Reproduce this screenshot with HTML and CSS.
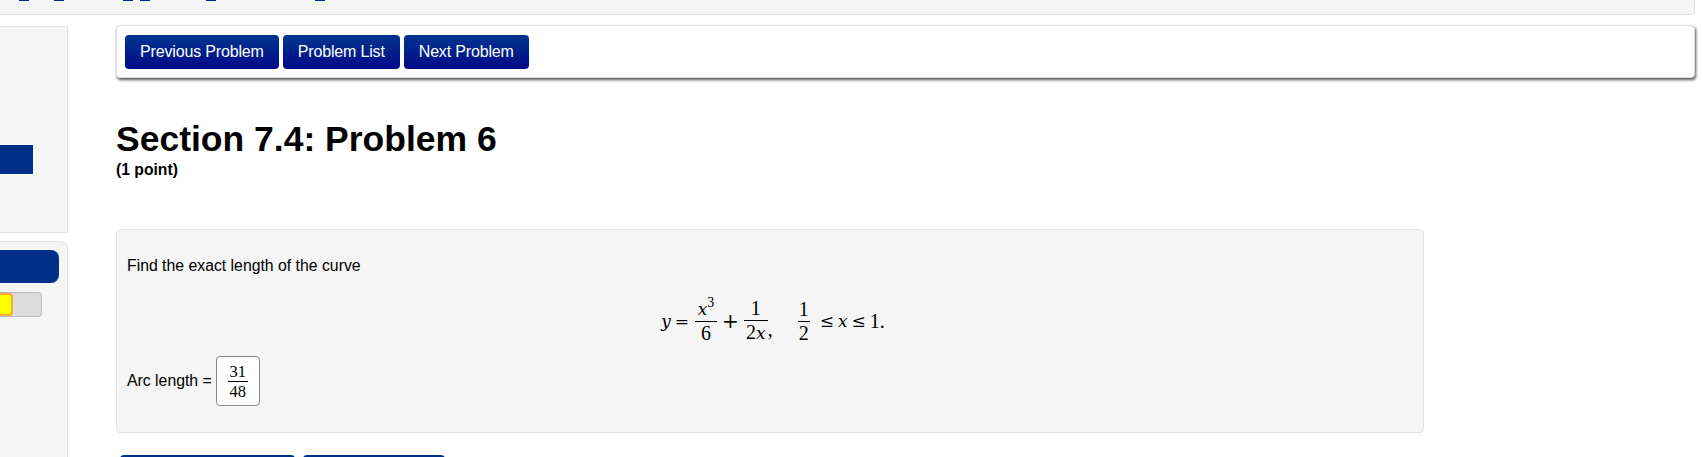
FILE: index.html
```html
<!DOCTYPE html>
<html lang="en">
<head>
	<meta charset="UTF-8">
	<title>Section 7.4: Problem 6</title>
	<link rel="stylesheet" href="styles.css">
</head>
<body>
	<div class="topbar">
		<span class="mark m1"></span>
		<span class="mark m2"></span>
		<span class="mark m3"></span>
		<span class="mark m4"></span>
		<span class="mark m5"></span>
		<span class="mark m6"></span>
	</div>
	<div class="page">
		<div class="sidebar">
			<div class="panel panel-top">
				<div class="block"></div>
			</div>
			<div class="panel panel-progress">
				<div class="pill"></div>
				<div class="progressbar">
					<div class="progress"></div>
				</div>
			</div>
		</div>
		<div class="main">
			<div class="toolbar">
				<a class="btn">Previous Problem</a>
				<a class="btn">Problem List</a>
				<a class="btn">Next Problem</a>
			</div>
			<h1>Section 7.4: Problem 6</h1>
			<div class="points">(1 point)</div>
			<div class="problem">
				<p class="intro">Find the exact length of the curve</p>
				<div class="math">
					<i>y</i><span class="rel">=</span>
					<span class="frac wide"><span class="num"><i>x</i><sup>3</sup></span><span class="den">6</span></span>
					<span class="bin">+</span>
					<span class="frac wider"><span class="num">1</span><span class="den">2<i>x</i></span></span>
					<span class="comma">,</span>
					<span class="frac narrow"><span class="num">1</span><span class="den">2</span></span>
					<span class="rel rel-first">≤</span><i>x</i><span class="rel">≤</span>1.
				</div>
				<div class="answer">
					<span>Arc length =</span>
					<span class="answer-box">
						<span class="frac small"><span class="num">31</span><span class="den">48</span></span>
					</span>
				</div>
			</div>
			<div class="actions">
				<a class="btn-cut first"></a>
				<a class="btn-cut second"></a>
			</div>
		</div>
	</div>
</body>
</html>
```

FILE: styles.css
```css
*{
	margin: 0;
	padding: 0;
	box-sizing: border-box;
}
html,body{
	height: 457px;
	overflow: hidden;
}
body{
	background-color: #fff;
	font-family: "Liberation Sans", Arial, sans-serif;
	color: #000;
}
.topbar{
	display: flex;
	width: 1695px;
	height: 15px;
	background-color: #f5f5f5;
	border: 1px solid #e3e3e3;
	border-width: 0 1px 1px 0;
	border-radius: 0 0 4px 0;
}
.mark{
	width: 10px;
	height: 1px;
	background-color: #00218e;
}
.m1{ margin-left: 19px; }
.m2{ margin-left: 25px; }
.m3{ margin-left: 59px; }
.m4{ margin-left: 7px; }
.m5{ margin-left: 56px; }
.m6{ margin-left: 99px; }

.page{
	display: grid;
	grid-template-columns: 68px 1fr;
	column-gap: 48px;
	height: 442px;
	padding-top: 10px;
	overflow: hidden;
}
.panel{
	background-color: #f5f5f5;
	border: 1px solid #e3e3e3;
	border-left: 0;
}
.panel-top{
	height: 207px;
	padding-top: 118px;
	margin-top: 1px;
}
.block{
	width: 33px;
	height: 29px;
	background-color: #003087;
}
.panel-progress{
	height: 240px;
	margin-top: 8px;
	padding-top: 8px;
	border-radius: 0 8px 0 0;
}
.pill{
	width: 59px;
	height: 33px;
	background-color: #003087;
	border-radius: 0 8px 8px 0;
}
.progressbar{
	width: 42px;
	height: 25px;
	margin-top: 9px;
	background-color: #dcdcdc;
	border: 1px solid #bbb;
	border-left: 0;
	border-radius: 0 4px 4px 0;
}
.progress{
	width: 13px;
	height: 23px;
	background-color: #ff0;
	border: 2px solid #fa3;
	border-left: 0;
	border-radius: 0 4px 4px 0;
}

.main{
	width: 1579px;
}
.toolbar{
	display: flex;
	gap: 4px;
	height: 53px;
	padding: 9px 8px;
	background-color: #fff;
	border: 1px solid #ddd;
	border-radius: 4px;
	box-shadow: 1px 2px 3px #555;
}
.btn{
	height: 34px;
	padding: 0 15px;
	line-height: 33px;
	font-size: 16px;
	letter-spacing: -0.16px;
	color: #fff;
	border-radius: 4px;
	background-image: linear-gradient(#00358f, #000a88);
}
h1{
	margin-top: 41px;
	font-size: 35.5px;
	line-height: 40px;
	font-weight: bold;
}
.points{
	margin-top: 3px;
	font-size: 15.7px;
	line-height: 16px;
	font-weight: bold;
}
.problem{
	width: 1308px;
	height: 204px;
	margin-top: 51px;
	padding: 27px 10px 0;
	background-color: #f5f5f5;
	border: 1px solid #e3e3e3;
	border-radius: 4px;
	font-size: 15.8px;
}
.intro{
	line-height: 18px;
}
.math{
	display: flex;
	align-items: center;
	justify-content: center;
	height: 50px;
	margin-top: 21px;
	padding-left: 6px;
	font-family: "Liberation Serif", serif;
	font-size: 20px;
}
.math i{
	font-family: "DejaVu Serif", serif;
	font-size: 17px;
}
.rel{
	margin: 0 4px;
	font-family: "DejaVu Serif", serif;
	font-size: 17px;
}
.rel-first{
	margin-left: 10px;
}
.bin{
	margin: 0 5px;
	font-family: "DejaVu Serif", serif;
	font-size: 20px;
}
.comma{
	margin-right: 25px;
	align-self: flex-start;
	margin-top: 22px;
}
.frac{
	display: inline-flex;
	flex-direction: column;
	align-items: center;
	line-height: 23px;
}
.num{
	display: block;
	width: 100%;
	text-align: center;
	border-bottom: 1px solid #000;
}
.den{
	display: block;
}
.frac sup{
	font-size: 14px;
	line-height: 0;
}
.wide{
	width: 22px;
	margin-left: 2px;
}
.wider{
	width: 24px;
}
.narrow{
	width: 12px;
}
.answer{
	display: flex;
	align-items: center;
	gap: 4px;
	margin-top: 10px;
}
.answer-box{
	display: flex;
	align-items: center;
	justify-content: center;
	width: 44px;
	height: 50px;
	background-color: #fff;
	border: 1px solid #888;
	border-radius: 4px;
}
.small{
	width: 20px;
	font-family: "Liberation Serif", serif;
	font-size: 16.5px;
	line-height: 19px;
}
.actions{
	display: flex;
	gap: 8px;
	margin-top: 22px;
	padding-left: 4px;
}
.btn-cut{
	height: 34px;
	background-color: #003087;
	border-radius: 4px;
}
.first{
	width: 175px;
}
.second{
	width: 142px;
}
```
